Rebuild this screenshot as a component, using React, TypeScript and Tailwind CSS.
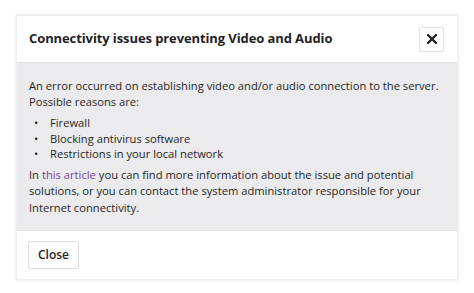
import { X } from "lucide-react";

const font = { fontFamily: '"Open Sans", "Noto Sans", sans-serif' };

const reasons = ["Firewall", "Blocking antivirus software", "Restrictions in your local network"];

export default function App() {
	return (
		<div className="w-[474px] h-[293px] bg-white pt-[15px] pl-4" style={font}>
			<div className="w-[442px] bg-white shadow-[0_0_3px_rgba(0,0,0,0.12)] border border-[#eeeeee] text-[#1f1f1f]">
				<div className="flex items-center justify-between h-[47px] pl-[12px] pr-[13px] border-b border-[#e2e2e4]">
					<h2 className="text-[13px] font-bold tracking-[-0.1px]">Connectivity issues preventing Video and Audio</h2>
					<button className="w-[25px] h-[25px] flex items-center justify-center border border-[#e0e0e0] rounded-[2px] bg-white">
						<X className="w-4 h-4" strokeWidth={3.5} />
					</button>
				</div>
				<div className="bg-[#ebebed] pl-[12px] pr-[16px] pt-[15px] pb-[14px] text-[11.2px] leading-[16px]">
					<p>An error occurred on establishing video and/or audio connection to the server. Possible reasons are:</p>
					<ul className="my-[5px] leading-[15.5px]">
						{reasons.map((r) => (
							<li key={r} className="flex">
								<span className="w-[21px] pl-[5px]">•</span>
								<span>{r}</span>
							</li>
						))}
					</ul>
					<p className="leading-[16.5px]">
						In <a className="text-[#7a3d9e]">this article</a> you can find more information about the issue and potential solutions, or you can contact the system administrator responsible for your Internet connectivity.
					</p>
				</div>
				<div className="border-t border-[#e2e2e4] h-[49px] flex items-center pl-[11px]">
					<button className="w-[51px] h-[28px] border border-[#dedede] rounded-[2px] text-[12px] font-semibold bg-white">Close</button>
				</div>
			</div>
		</div>
	);
}
